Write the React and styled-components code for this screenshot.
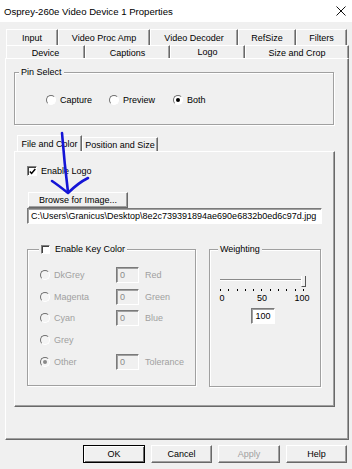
import React from 'react';
import styled, { createGlobalStyle } from 'styled-components';

const GlobalStyle = createGlobalStyle`
  * { box-sizing: border-box; }
  html, body { margin: 0; padding: 0; background: #f0f0f0; }
  body {
    font-family: "Liberation Sans", Arial, sans-serif;
    font-size: 9px;
    color: #000;
  }
`;

const Window = styled.div`
  position: relative;
  width: 352px;
  height: 469px;
  background: #f0f0f0;
  overflow: hidden;
`;

const TitleBar = styled.div`
  height: 22px;
  background: #fff;
  display: flex;
  align-items: center;
  justify-content: space-between;
  padding: 0 6px 0 4px;
  font-size: 9.6px;
`;

const TabRows = styled.div`
  margin-top: 7px;
`;

const TabRow = styled.div`
  display: flex;
  height: ${p => p.$h}px;
  padding-left: 6px;
`;

const Tab = styled.div`
  width: ${p => p.$w}px;
  display: flex;
  align-items: center;
  justify-content: center;
  padding-top: ${p => p.$pt || 0}px;
  border-left: 1px solid #fff;
  border-top: 1px solid #fff;
  border-right: 1px solid #696969;
  box-shadow: inset -1px 0 #a0a0a0;
  background: #f0f0f0;
`;

const Panel = styled.div`
  width: ${p => p.$w}px;
  height: ${p => p.$h}px;
  margin-left: ${p => p.$ml || 0}px;
  border-top: 1px solid #fff;
  border-left: 1px solid #fff;
  border-right: 1px solid #696969;
  border-bottom: 1px solid #696969;
  box-shadow: inset -1px -1px #a0a0a0;
  padding: ${p => p.$pad};
`;

const GroupBox = styled.div`
  position: relative;
  flex: none;
  width: ${p => p.$w}px;
  height: ${p => p.$h}px;
  border: 1px solid #a0a0a0;
  box-shadow: inset 1px 1px #fff, 1px 1px #fff;
`;

const Legend = styled.div`
  position: absolute;
  top: -6px;
  left: ${p => p.$left}px;
  padding: 0 2px;
  background: #f0f0f0;
  display: flex;
  align-items: center;
  gap: 5px;
  line-height: 11px;
`;

const RadioRow = styled.div`
  display: flex;
  align-items: center;
  padding: 22px 0 0 31px;
`;

const Option = styled.label`
  display: flex;
  align-items: center;
  gap: 4px;
  margin-right: ${p => p.$mr || 0}px;
  color: ${p => (p.$disabled ? '#a0a0a0' : '#000')};
`;

const RadioCircle = styled.span`
  flex: none;
  width: 10px;
  height: 10px;
  border-radius: 50%;
  border: 1px solid;
  border-color: #6f6f6f #fff #fff #6f6f6f;
  background: ${p => (p.$disabled ? '#f4f4f4' : '#fff')};
  display: flex;
  align-items: center;
  justify-content: center;

  &::after {
    content: '';
    width: 4px;
    height: 4px;
    border-radius: 50%;
    background: ${p => (p.$checked ? (p.$disabled ? '#8a8a8a' : '#000') : 'transparent')};
  }
`;

const CheckBox = styled.span`
  flex: none;
  width: ${p => p.$size}px;
  height: ${p => p.$size}px;
  border: 1px solid;
  border-color: #808080 #fff #fff #808080;
  box-shadow: inset 1px 1px #404040;
  background: #fff;
  display: flex;
  align-items: center;
  justify-content: center;
`;

const InnerTabs = styled.div`
  display: flex;
  align-items: flex-end;
  height: 16px;
  margin-top: 10px;
  padding-left: 3px;
`;

const InnerTab = styled.div`
  width: ${p => p.$w}px;
  height: ${p => p.$h}px;
  display: flex;
  align-items: center;
  justify-content: center;
  border-left: 1px solid #fff;
  border-top: 1px solid #fff;
  border-right: 1px solid #696969;
  box-shadow: inset -1px 0 #a0a0a0;
`;

const CheckRow = styled.label`
  display: flex;
  align-items: center;
  gap: 4px;
  margin-top: 14px;
  height: 10px;
`;

const Button = styled.div`
  width: ${p => p.$w}px;
  height: ${p => p.$h}px;
  margin: ${p => p.$m || 0};
  display: flex;
  align-items: center;
  justify-content: center;
  background: #f0f0f0;
  color: ${p => (p.$disabled ? '#a0a0a0' : '#000')};
  border: 1px solid;
  border-color: ${p => (p.$default ? '#000' : '#fff #696969 #696969 #fff')};
  box-shadow: ${p =>
    p.$default
      ? 'inset 1px 1px #fff, inset -1px -1px #696969'
      : 'inset -1px -1px #a0a0a0'};
`;

const TextBox = styled.div`
  width: ${p => p.$w}px;
  height: 16px;
  margin-left: ${p => p.$ml || 0}px;
  display: flex;
  align-items: center;
  padding-left: ${p => p.$pl ?? 3}px;
  justify-content: ${p => (p.$center ? 'center' : 'flex-start')};
  background: ${p => (p.$disabled ? '#f0f0f0' : '#fff')};
  color: ${p => (p.$disabled ? '#8a8a8a' : '#000')};
  border: 1px solid;
  border-color: #7a7a7a #fff #fff #7a7a7a;
  box-shadow: inset 1px 1px #a0a0a0;
  white-space: nowrap;
  overflow: hidden;
`;

const GroupsRow = styled.div`
  display: flex;
  gap: 13px;
  margin-top: 25px;
`;

const KeyGrid = styled.div`
  display: grid;
  grid-template-columns: 76px 23px auto;
  grid-auto-rows: 21.7px;
  align-items: center;
  padding: 14px 0 0 12px;
  color: #a0a0a0;
`;

const KeyLabel = styled.span`
  margin-left: 6px;
`;

const Weighting = styled.div`
  padding-left: 10px;
`;

const Slider = styled.div`
  position: relative;
  width: 85px;
  height: 12px;
  margin-top: 24px;
`;

const Track = styled.div`
  position: absolute;
  left: 0;
  right: 2px;
  top: 5px;
  height: 2px;
  border-top: 1px solid #8a8a8a;
  border-bottom: 1px solid #fff;
`;

const Thumb = styled.div`
  position: absolute;
  left: 81px;
  top: 2px;
  width: 5px;
  height: 11px;
  background: #f0f0f0;
  border-left: 1px solid #fff;
  border-right: 1px solid #555;
  border-bottom: 1px solid #555;
`;

const Ticks = styled.div`
  display: flex;
  justify-content: space-between;
  width: 84px;
  margin-top: 3px;
`;

const Tick = styled.span`
  width: 1px;
  height: 2px;
  background: #000;
`;

const ScaleLabels = styled.div`
  display: flex;
  justify-content: space-between;
  width: 98px;
  margin: 2px 0 0 -7px;
  line-height: 10px;

  span {
    width: 18px;
    text-align: center;
  }
`;

const ButtonBar = styled.div`
  display: flex;
  justify-content: flex-end;
  gap: 6px;
  margin-top: 5px;
  padding-right: 5px;
`;

const Overlay = styled.svg`
  position: absolute;
  left: 0;
  top: 0;
  pointer-events: none;
`;

const Check = () => (
  <svg width="7" height="7" viewBox="0 0 7 7">
    <polyline points="0.8,3.4 2.6,5.4 6.3,0.9" fill="none" stroke="#000" strokeWidth="1.5" />
  </svg>
);

const Radio = ({ label, checked, disabled, mr }) => (
  <Option $mr={mr} $disabled={disabled}>
    <RadioCircle $checked={checked} $disabled={disabled} />
    {label}
  </Option>
);

const keyRows = [
  { name: 'DkGrey', field: 'Red' },
  { name: 'Magenta', field: 'Green' },
  { name: 'Cyan', field: 'Blue' },
  { name: 'Grey' },
  { name: 'Other', field: 'Tolerance', checked: true },
];

const App = () => {
  const ticks = Array.from({ length: 11 });

  return (
    <Window>
      <GlobalStyle />
      <TitleBar>
        <span>Osprey-260e Video Device 1 Properties</span>
        <svg width="10" height="10" viewBox="0 0 10 10">
          <path d="M0.5 0.5 L9.5 9.5 M9.5 0.5 L0.5 9.5" stroke="#111" strokeWidth="1" />
        </svg>
      </TitleBar>

      <TabRows>
        <TabRow $h={16}>
          <Tab $w={52}>Input</Tab>
          <Tab $w={92}>Video Proc Amp</Tab>
          <Tab $w={88}>Video Decoder</Tab>
          <Tab $w={58}>RefSize</Tab>
          <Tab $w={51}>Filters</Tab>
        </TabRow>
        <TabRow $h={13}>
          <Tab $w={79} $pt={2}>Device</Tab>
          <Tab $w={85} $pt={2}>Captions</Tab>
          <Tab $w={75}>Logo</Tab>
          <Tab $w={104} $pt={2}>Size and Crop</Tab>
        </TabRow>
      </TabRows>

      <Panel $w={344} $h={382} $ml={5} $pad="13px 0 0 8px">
        <GroupBox $w={320} $h={53}>
          <Legend $left={4}>Pin Select</Legend>
          <RadioRow>
            <Radio label="Capture" mr={17} />
            <Radio label="Preview" mr={18} />
            <Radio label="Both" checked />
          </RadioRow>
        </GroupBox>

        <InnerTabs>
          <InnerTab $w={65} $h={16}>File and Color</InnerTab>
          <InnerTab $w={76} $h={14}>Position and Size</InnerTab>
        </InnerTabs>

        <Panel $w={321} $h={256} $pad="0 0 0 12px">
          <CheckRow>
            <CheckBox $size={10}>
              <Check />
            </CheckBox>
            Enable Logo
          </CheckRow>
          <Button $w={100} $h={16} $m="16px 0 0 1px">Browse for Image...</Button>
          <TextBox $w={295}>C:\Users\Granicus\Desktop\8e2c739391894ae690e6832b0ed6c97d.jpg</TextBox>

          <GroupsRow>
            <GroupBox $w={169} $h={137}>
              <Legend $left={11}>
                <CheckBox $size={9} />
                Enable Key Color
              </Legend>
              <KeyGrid>
                {keyRows.map(row => (
                  <React.Fragment key={row.name}>
                    <Radio label={row.name} checked={row.checked} disabled />
                    {row.field ? (
                      <TextBox $w={23} $disabled>0</TextBox>
                    ) : (
                      <span />
                    )}
                    {row.field ? <KeyLabel>{row.field}</KeyLabel> : <span />}
                  </React.Fragment>
                ))}
              </KeyGrid>
            </GroupBox>

            <GroupBox $w={112} $h={138}>
              <Legend $left={8}>Weighting</Legend>
              <Weighting>
                <Slider>
                  <Track />
                  <Thumb />
                </Slider>
                <Ticks>
                  {ticks.map((_, i) => (
                    <Tick key={i} />
                  ))}
                </Ticks>
                <ScaleLabels>
                  <span>0</span>
                  <span>50</span>
                  <span>100</span>
                </ScaleLabels>
                <TextBox $w={24} $ml={31} $pl={0} $center style={{ marginTop: 5 }}>
                  100
                </TextBox>
              </Weighting>
            </GroupBox>
          </GroupsRow>
        </Panel>
      </Panel>

      <ButtonBar>
        <Button $w={62} $h={18} $default>OK</Button>
        <Button $w={61} $h={18}>Cancel</Button>
        <Button $w={62} $h={18} $disabled>Apply</Button>
        <Button $w={61} $h={18}>Help</Button>
      </ButtonBar>

      <Overlay width="352" height="469" viewBox="0 0 352 469">
        <g fill="none" stroke="#1515d6" strokeWidth="2.6" strokeLinecap="round" strokeLinejoin="round">
          <path d="M62 133 C63.5 152, 65.5 172, 68 192" />
          <path d="M52 181 C58 185, 63 189, 68 193 C73 188, 80 182, 88 178" />
        </g>
      </Overlay>
    </Window>
  );
};

export default App;
